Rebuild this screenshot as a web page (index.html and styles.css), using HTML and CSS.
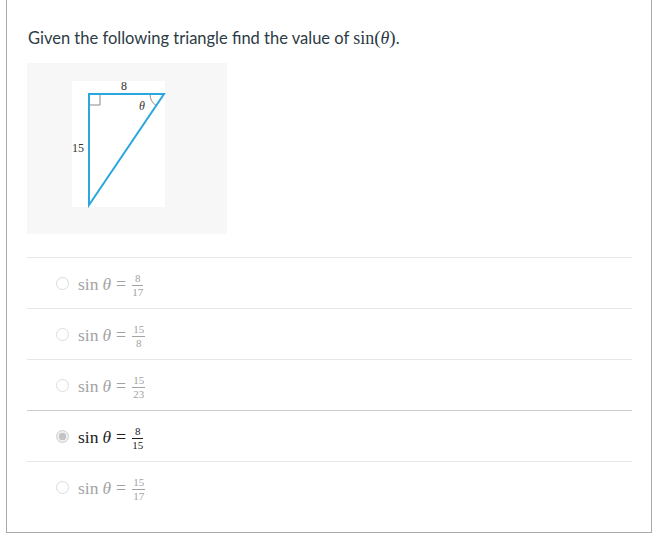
FILE: index.html
```html
<!DOCTYPE html>
<html>
<head>
<meta charset="utf-8">
<link rel="stylesheet" href="styles.css">
</head>
<body>
<div class="card">
  <p class="question">Given the following triangle find the value of <span class="m">sin</span><span class="m paren">(</span><span class="m it">θ</span><span class="m paren">)</span>.</p>
  <div class="figure">
    <svg width="200" height="171" viewBox="0 0 200 171">
      <rect x="45" y="18" width="93" height="126" fill="#ffffff"/>
      <path d="M73 31 V42 H62" fill="none" stroke="#8a8a8a" stroke-width="1"/>
      <path d="M123 31 A14 14 0 0 0 129.2 42.6" fill="none" stroke="#8a8a8a" stroke-width="1"/>
      <path d="M62 31 L137 31 L62 142 Z" fill="none" stroke="#2ba6df" stroke-width="2" stroke-linejoin="miter"/>
      <text x="97" y="27" class="lbl" text-anchor="middle">8</text>
      <text x="51" y="89" class="lbl" text-anchor="middle">15</text>
      <text x="115" y="47" class="lbl it" text-anchor="middle">θ</text>
    </svg>
  </div>
  <ul class="options">
    <li class="opt"><span class="radio"></span><span class="expr"><span class="fn">sin</span><span class="var">θ</span><span class="eq">=</span><span class="frac"><span class="num">8</span><span class="den">17</span></span></span></li>
    <li class="opt"><span class="radio"></span><span class="expr"><span class="fn">sin</span><span class="var">θ</span><span class="eq">=</span><span class="frac"><span class="num">15</span><span class="den">8</span></span></span></li>
    <li class="opt"><span class="radio"></span><span class="expr"><span class="fn">sin</span><span class="var">θ</span><span class="eq">=</span><span class="frac"><span class="num">15</span><span class="den">23</span></span></span></li>
    <li class="opt selected"><span class="radio"></span><span class="expr"><span class="fn">sin</span><span class="var">θ</span><span class="eq">=</span><span class="frac"><span class="num">8</span><span class="den">15</span></span></span></li>
    <li class="opt"><span class="radio"></span><span class="expr"><span class="fn">sin</span><span class="var">θ</span><span class="eq">=</span><span class="frac"><span class="num">15</span><span class="den">17</span></span></span></li>
  </ul>
</div>
</body>
</html>
```
FILE: styles.css
```css
html, body {
  margin: 0;
  padding: 0;
  background: #ffffff;
}
body {
  font-family: Lato, "Open Sans", sans-serif;
  color: #2d3b45;
}
.card {
  box-sizing: border-box;
  margin: -10px 0 0 6px;
  width: 646px;
  height: 543px;
  border: 1px solid #a9a9a9;
  padding: 0 19px 0 20px;
}
.question {
  margin: 37px 0 0 1px;
  font-size: 16.5px;
  line-height: 20px;
  height: 20px;
}
.m {
  font-family: "Liberation Serif", "DejaVu Serif", serif;
  font-size: 18px;
}
.paren {
  font-size: 19px;
}
.it {
  font-style: italic;
}
.figure {
  margin-top: 15px;
  width: 200px;
  height: 171px;
  background: #f7f7f7;
}
.figure svg {
  display: block;
}
.lbl {
  font-family: "Liberation Serif", "DejaVu Serif", serif;
  font-size: 12px;
  fill: #333333;
}
.options {
  list-style: none;
  margin: 23px 0 0 0;
  padding: 0;
}
.opt {
  box-sizing: border-box;
  height: 51px;
  border-top: 1px solid #e6e6e6;
  display: flex;
  align-items: center;
  padding-left: 29px;
  color: #a3a3a3;
}
.opt.selected {
  border-top-color: #cccccc;
  color: #222222;
}
.radio {
  box-sizing: border-box;
  width: 13px;
  height: 13px;
  border-radius: 50%;
  border: 1px solid #dcdcdc;
  background: #ffffff;
  margin-right: 9px;
}
.selected .radio {
  border-color: #cfcfcf;
  background: radial-gradient(circle, #c4c4c4 0 3.5px, #efefef 4px);
}
.expr {
  display: flex;
  align-items: center;
  font-family: "Liberation Serif", "DejaVu Serif", serif;
  font-size: 17.5px;
  margin-top: 2px;
}
.fn {
  margin-right: 4px;
}
.var {
  font-style: italic;
}
.eq {
  margin: 0 6px 0 5px;
  font-size: 18px;
}
.frac {
  display: inline-flex;
  flex-direction: column;
  align-items: center;
  font-size: 11px;
  line-height: 11px;
  margin-top: 2px;
}
.num {
  padding: 0 1px 1px;
  border-bottom: 1px solid currentColor;
  align-self: stretch;
  text-align: center;
}
.den {
  padding-top: 1px;
}
```
